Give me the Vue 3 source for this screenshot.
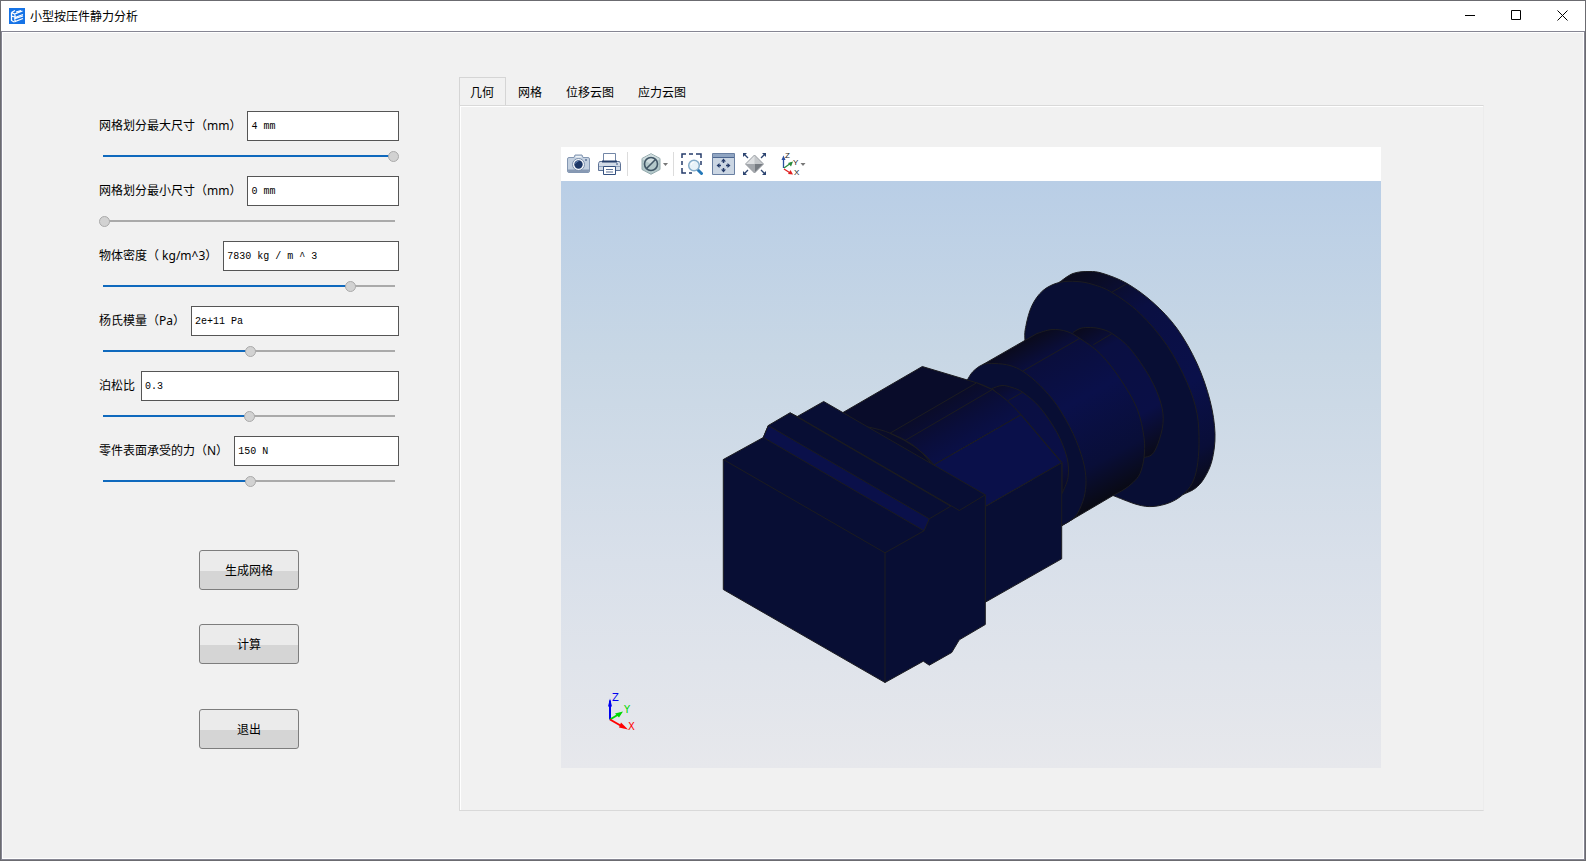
<template>
  <div class="window">
    <!-- 标题栏 -->
    <header class="title-bar">
      <svg class="app-logo" viewBox="0 0 16 16" aria-hidden="true">
        <rect width="16" height="16" fill="#1673e6" />
        <path d="M2.500 4.500 6 2.500M2.500 4.500v8L5 14M2.500 8l3 1M2.500 4.500 5.500 6l8-3M6 6v7.500l8-3M6 9.500l8-3M7 4l5-1.500M5 11 14 8" fill="none" stroke="#fff" stroke-width="1.300" />
      </svg>
      <h1>小型按压件静力分析</h1>
      <div class="window-actions">
        <button type="button" aria-label="最小化">
          <svg viewBox="0 0 11 11"><path d="M0 5.500h10" /></svg>
        </button>
        <button type="button" aria-label="最大化">
          <svg viewBox="0 0 11 11"><path d="M.5.500h9v9h-9z" /></svg>
        </button>
        <button type="button" aria-label="关闭">
          <svg viewBox="0 0 11 11"><path d="M.5.500l10 10M10.500.500l-10 10" /></svg>
        </button>
      </div>
    </header>

    <main class="content">
      <!-- 左侧参数 -->
      <form class="params" @submit.prevent>
        <div class="param" v-for="item in params" :key="item.id">
          <div class="param-row">
            <label :for="item.id">{{ item.label }}</label>
            <input class="param-input" :id="item.id" type="text" v-model="item.text" />
          </div>
          <input
            class="slider"
            type="range"
            min="0"
            max="100"
            step="0.5"
            v-model="item.value"
            :aria-label="item.label"
            :style="{ '--fill': item.value + '%' }"
          />
        </div>

        <div class="actions">
          <button type="button" class="action-btn">生成网格</button>
          <button type="button" class="action-btn">计算</button>
          <button type="button" class="action-btn exit-btn">退出</button>
        </div>
      </form>

      <!-- 右侧视图 -->
      <section class="viewer">
        <div class="tabs" role="tablist">
          <button
            v-for="tab in tabs"
            :key="tab"
            type="button"
            role="tab"
            class="tab"
            :class="{ active: tab === activeTab }"
            :aria-selected="tab === activeTab"
            @click="activeTab = tab"
          >{{ tab }}</button>
        </div>

        <div class="pane">
          <div class="toolbar">
            <button type="button" class="tool" aria-label="截图">
              <svg width="23" height="20" viewBox="0 0 23 20">
                <path d="M7 3.500 8 1h7l1 2.500h5q1.500 0 1.500 1.500v12q0 1.500-1.500 1.500H2Q.5 18.500.5 17V5q0-1.500 1.500-1.500z" fill="#c3d0e0" stroke="#8497b2" />
                <path d="M8 3.500 9 2h5l1 1.500z" fill="#eef3f8" />
                <path d="M1 15.500h21V17q0 1-1 1H2q-1 0-1-1z" fill="#8799b3" />
                <circle cx="11.500" cy="10.500" r="6" fill="#f4f7fa" stroke="#7b8fac" />
                <circle cx="11.500" cy="10.500" r="4.200" fill="#1d3766" />
                <path d="M8.500 9.500a3.300 3.300 0 0 1 3-2.500" fill="none" stroke="#6d8bbd" />
                <path d="M18 6h2" stroke="#2c4470" />
              </svg>
            </button>
            <button type="button" class="tool" aria-label="打印">
              <svg width="23" height="22" viewBox="0 0 23 22">
                <path d="M5.500 8V.500h12V8" fill="#fff" stroke="#7286a6" />
                <path d="M1.500 8.500h20l1 2v7h-22v-7z" fill="#d2dbe7" stroke="#5e7397" />
                <path d="M1 13.500h21" stroke="#8fa1bb" />
                <path d="M18 11h2" stroke="#34507f" />
                <path d="M4 8.500h15" stroke="#263f6b" stroke-width="2" />
                <path d="M5.500 13.500h12v8h-12z" fill="#fff" stroke="#34507f" />
                <path d="M8 16.500h7M8 19h7" stroke="#5e7397" />
              </svg>
            </button>
            <span class="divider"></span>
            <button type="button" class="tool" aria-label="剖切">
              <svg width="29" height="22" viewBox="0 0 29 22">
                <path d="M10 .7 19 5.500v11L10 21.300 1 16.500v-11z" fill="#b3c8ca" stroke="#93a9ac" />
                <path d="m10 1 9 5-9 5-9-5z" fill="#d0dddf" />
                <circle cx="10" cy="11" r="6.500" fill="none" stroke="#405666" stroke-width="1.600" />
                <path d="m5.500 15.500 9-9" stroke="#405666" stroke-width="1.600" />
                <path d="M22 10h5l-2.500 3z" fill="#777" />
              </svg>
            </button>
            <span class="divider"></span>
            <button type="button" class="tool" aria-label="框选缩放">
              <svg width="23" height="22" viewBox="0 0 23 22">
                <path d="M1 5V1h4M8 1h4M15 1h5v4M20 8v4M1 8v4M1 15v5h4M8 20h3" fill="none" stroke="#263c6b" stroke-width="1.500" />
                <path d="m16.500 16.500 4 4" stroke="#2478b8" stroke-width="3" stroke-linecap="round" />
                <circle cx="13" cy="12.500" r="5.300" fill="#e8f3f9" stroke="#86adca" stroke-width="1.500" />
                <path d="M10 12a3.500 3.500 0 0 1 3-3" fill="none" stroke="#fff" />
              </svg>
            </button>
            <button type="button" class="tool" aria-label="适合窗口">
              <svg width="23" height="22" viewBox="0 0 23 22">
                <path d="M.5.500h22v21H.5z" fill="#cbd6e3" stroke="#6a80a2" />
                <path d="M1 1h21v3H1z" fill="#90a5c2" />
                <path d="M1 4.500h21" stroke="#4c6690" />
                <path d="M11.500 7v3M11.500 15v3M6 12.500h3M14 12.500h3" stroke="#263c6b" stroke-width="1.500" />
                <path d="m11.500 5.500 2.500 3H9zM11.500 19.500 9 16.500h5zM4.500 12.500 7.500 10v5zM18.500 12.500 15.500 15v-5z" fill="#263c6b" />
              </svg>
            </button>
            <button type="button" class="tool" aria-label="全部显示">
              <svg width="23" height="22" viewBox="0 0 23 22">
                <path d="m11.500 2 9 9H2.500z" fill="#dfe1e3" />
                <path d="M11.500 2v9h9z" fill="#c6c9cc" />
                <path d="M2.500 11h9v9z" fill="#a3a7ac" />
                <path d="M11.500 11h9l-9 9z" fill="#777c82" />
                <path d="m11.500 2 9 9-9 9-9-9z" fill="none" stroke="#9a9ea3" />
                <path d="m1 1 4 4M22 1l-4 4M1 21l4-4M22 21l-4-4" stroke="#2c4470" stroke-width="1.300" />
                <path d="M0 0h4L0 4zM23 0h-4l4 4zM0 22v-4l4 4zM23 22v-4l-4 4z" fill="#2c4470" />
              </svg>
            </button>
            <button type="button" class="tool tool-axes" aria-label="视角">
              <svg width="26" height="24" viewBox="0 0 26 24">
                <g fill="none" stroke-width="1.300">
                  <path d="M2.500 16V6" stroke="#2b4fa0" />
                  <path d="m3 16 7-5" stroke="#2a8a3c" />
                  <path d="m3 17 7 4.500" stroke="#e02020" />
                </g>
                <path d="M2.500 3.500 4.500 8h-4z" fill="#2b4fa0" />
                <path d="m12 9.500-2 5-3-3.500z" fill="#2a8a3c" />
                <path d="m12 22.500-5-.500 2.500-4z" fill="#e02020" />
                <text x="4" y="6">Z</text>
                <text x="12" y="13">Y</text>
                <text x="13" y="23">X</text>
                <path d="M19.500 11h5L22 14z" fill="#777" />
              </svg>
            </button>
          </div>

          <div class="canvas">
            <svg class="scene" viewBox="561 181 820 586" role="img" aria-label="几何模型">
              <defs>
                <linearGradient id="flangeRim" gradientUnits="userSpaceOnUse" x1="1070" y1="275" x2="1195" y2="495">
                  <stop offset="0" stop-color="#0a0b1c" />
                  <stop offset="0.25" stop-color="#0a0f42" />
                  <stop offset="0.6" stop-color="#0a104a" />
                  <stop offset="0.85" stop-color="#090e38" />
                  <stop offset="1" stop-color="#0a0a14" />
                </linearGradient>
                <linearGradient id="cylinder" gradientUnits="userSpaceOnUse" x1="1005" y1="345" x2="1092" y2="507">
                  <stop offset="0" stop-color="#0a0a16" />
                  <stop offset="0.16" stop-color="#0a0e3c" />
                  <stop offset="0.45" stop-color="#0a104a" />
                  <stop offset="0.8" stop-color="#090e38" />
                  <stop offset="1" stop-color="#090a14" />
                </linearGradient>
                <linearGradient id="neck" gradientUnits="userSpaceOnUse" x1="1080" y1="327" x2="1154" y2="458">
                  <stop offset="0" stop-color="#0a0a1c" />
                  <stop offset="0.2" stop-color="#0a0f42" />
                  <stop offset="0.7" stop-color="#0a0f46" />
                  <stop offset="1" stop-color="#0a0a14" />
                </linearGradient>
                <linearGradient id="fillet" gradientUnits="userSpaceOnUse" x1="940" y1="405" x2="968" y2="453">
                  <stop offset="0" stop-color="#0a0c2a" />
                  <stop offset="0.5" stop-color="#0a0e3c" />
                  <stop offset="1" stop-color="#0a104a" />
                </linearGradient>
              </defs>

              <g class="solid">
                <!-- 圆盘 -->
                <path :d="flangeOuter" fill="url(#flangeRim)" />
                <path :d="flangeFace" fill="#080e34" />
                <path d="M1111.700 291.700 1126.700 283.300" />
                <!-- 细颈 -->
                <path :d="neckShape" fill="url(#neck)" />
                <path d="M1111.700 333.300 1093.300 344.300" />
                <!-- 圆柱 -->
                <path :d="cylinderShape" fill="url(#cylinder)" />
                <path :d="cylinderFace" fill="#080e34" />
                <path d="M1022.700 370.700 1080 337.700" />
                <path :d="innerShaft" fill="url(#neck)" />
                <path d="M1022.700 391.700 1008.300 400" />
                <!-- 中段 -->
                <path d="M843 412 922.300 366 976.700 382.300Q985 385 992.300 389L940 472 905 452z" fill="#090c2a" />
                <path d="M890 432.700 976.700 382.300 992.300 389Q1008 399 1021 414.300L934 464.300Q920 446 890 432.700z" fill="url(#fillet)" />
                <path d="M905 440 992.300 389" />
                <path d="M934 464.300 1021 414.300 1061.700 462.300 985.300 506z" fill="#0a104a" />
                <path d="M985.300 506 1061.700 462.300V558.300L985.300 601.700z" fill="#080e34" />
                <path d="M865 426Q882 429 890 432.700 916 442 930.700 462.300" />
                <!-- 头部 -->
                <path d="M723.300 459 763.300 437 768.300 425 790 412.300 797.300 416 823.700 401 985.300 494.300V624L959.300 639.300 951.700 652 929.300 664.700 923.300 660.700 885 682 723.300 589z" fill="#080e34" />
                <path d="M763.300 437 768.300 425 929.300 518.300 924 530.300z" fill="#0a104a" />
                <path d="M723.300 459 885 552.300V682M885 552.300 924 530.300M929.300 518.300 950.700 505.700M959.300 510 985.300 494.300M790 412.300 950.700 505.700M797.300 416 959.300 510" />
              </g>

              <!-- 坐标轴 -->
              <g class="triad">
                <path d="M610 719V700" stroke="#0000f0" stroke-width="2" />
                <path d="M610 698 612 706H608z" fill="#0000f0" />
                <path d="M610 719 620 713" stroke="#00d800" stroke-width="2" />
                <path d="M623 711 619 717 615 713z" fill="#00d800" />
                <path d="M610 719 624 727" stroke="#f00" stroke-width="2" />
                <path d="M628 729 619 727 621 722z" fill="#f00" />
                <text x="612" y="700" fill="#0000f0">Z</text>
                <text x="624" y="712" fill="#00d800">Y</text>
                <text x="628" y="729" fill="#f00">X</text>
              </g>
            </svg>
          </div>
        </div>
      </section>
    </main>
  </div>
</template>

<script setup>
import { ref, reactive } from 'vue'

const tabs = ['几何', '网格', '位移云图', '应力云图']
const activeTab = ref('几何')

const params = reactive([
  { id: 'mesh-max', label: '网格划分最大尺寸（mm）', text: '4 mm', value: 100 },
  { id: 'mesh-min', label: '网格划分最小尺寸（mm）', text: '0 mm', value: 0 },
  { id: 'density', label: '物体密度（ kg/m^3）', text: '7830 kg / m ^ 3', value: 85 },
  { id: 'young', label: '杨氏模量（Pa）', text: '2e+11 Pa', value: 50.5 },
  { id: 'poisson', label: '泊松比', text: '0.3', value: 50 },
  { id: 'force', label: '零件表面承受的力（N）', text: '150 N', value: 50.5 }
])

// 过所有点的平滑曲线
const smooth = (pts) => {
  let d = `M${pts[0][0]} ${pts[0][1]}`
  for (let i = 0; i < pts.length - 1; i++) {
    const a = pts[i - 1] || pts[i]
    const b = pts[i]
    const c = pts[i + 1]
    const e = pts[i + 2] || c
    d += `C${b[0] + (c[0] - a[0]) / 6} ${b[1] + (c[1] - a[1]) / 6} ${c[0] - (e[0] - b[0]) / 6} ${c[1] - (e[1] - b[1]) / 6} ${c[0]} ${c[1]}`
  }
  return d
}

const flangeLeft = [[1113, 495], [1080, 475], [1045, 420], [1029, 370], [1025, 340], [1026, 325], [1032, 305], [1043, 290], [1059, 282]]
const flangeEdge = [[1059, 282], [1077, 281], [1093, 284], [1112, 292], [1140, 313], [1167, 345], [1187, 382], [1197, 413], [1199, 443], [1197, 467], [1192, 483], [1183, 494]]
const flangeBottom = [[1183, 494], [1170, 502], [1153, 506], [1137, 504], [1113, 495]]

const flangeOuter = smooth([
  [1059, 282], [1073, 273], [1089, 271], [1103, 273], [1127, 283], [1153, 302], [1177, 328], [1197, 363],
  [1210, 400], [1215, 433], [1212, 460], [1204, 478], [1195, 488], [1183, 494]
])
const flangeFace = smooth([...flangeLeft, ...flangeEdge.slice(1), ...flangeBottom.slice(1)]) + 'z'

const neckShape = smooth([
  [1073, 332], [1080, 328], [1088, 327], [1099, 328], [1112, 333], [1130, 348], [1150, 377], [1161, 403],
  [1163, 423], [1158, 443], [1152, 454], [1144, 457]
])

const cylinderShape = smooth([
  [1037, 333], [1052, 329], [1067, 331], [1080, 338], [1100, 353], [1120, 378], [1137, 408], [1144, 437],
  [1144, 457], [1140, 473], [1133, 482], [1124, 489], [1113, 495]
]) + 'L1062 525 983 364z'

const cylinderFace = smooth([
  [967, 380], [973, 371], [983, 364], [995, 363], [1010, 365], [1023, 371], [1040, 385], [1057, 405],
  [1073, 433], [1083, 460], [1086, 480], [1084, 497], [1078, 512], [1072, 519], [1062, 525]
]) + 'z'

const innerShaft = smooth([
  [992, 388], [1002, 385], [1012, 387], [1023, 392], [1040, 407], [1057, 432], [1067, 457], [1068, 477], [1062, 493]
]) + 'V462L1021 414z'
</script>

<style>
html,
body {
  margin: 0;
  background: #f0f0f0;
}
</style>

<style scoped>
.window {
  min-height: 100vh;
  box-sizing: border-box;
  display: flex;
  flex-direction: column;
  border: 1px solid #6b6b70;
  font-family: "Noto Sans CJK SC", sans-serif;
  font-size: 12px;
  color: #000;
}

button {
  font-family: inherit;
  font-size: inherit;
  color: inherit;
}

/* 标题栏 */
.title-bar {
  height: 30px;
  display: flex;
  align-items: center;
  gap: 5px;
  padding-left: 8px;
  background: #fff;
}

.app-logo {
  width: 16px;
  height: 16px;
}

h1 {
  flex: 1;
  margin: 0;
  padding-bottom: 2px;
  font-size: 12px;
  font-weight: 400;
}

.window-actions {
  display: flex;
}

.window-actions button {
  width: 46px;
  height: 30px;
  display: grid;
  place-items: center;
  padding: 0 0 2px;
  border: 0;
  background: none;
}

.window-actions svg {
  width: 11px;
  height: 11px;
  fill: none;
  stroke: #000;
}

/* 主体 */
.content {
  flex: 1;
  display: grid;
  grid-template-columns: 300px minmax(0, 1fr);
  gap: 60px;
  padding: 45px 100px 48px 97px;
  border: 1px solid #868693;
  box-shadow: inset 0 0 0 1px #fff;
  background: #f1f1f1;
}

/* 参数表单 */
.params {
  padding-top: 34px;
}

.param {
  margin-bottom: 14px;
}

.param-row {
  display: flex;
  align-items: center;
  gap: 6px;
  margin-bottom: 10px;
}

.param-row label {
  padding-bottom: 2px;
  font-family: "Noto Sans", "Noto Sans CJK SC", sans-serif;
  white-space: pre;
}

.param-input {
  flex: 1;
  min-width: 0;
  height: 30px;
  box-sizing: border-box;
  padding: 0 3px;
  border: 1px solid #555;
  background: #fff;
  font-family: "Liberation Mono", monospace;
  font-size: 10px;
  color: #000;
}

.slider {
  appearance: none;
  display: block;
  width: 100%;
  height: 11px;
  margin: 0;
  background: linear-gradient(to right, #0f69bd var(--fill), #aaa var(--fill)) no-repeat 4px 4px / calc(100% - 8px) 2px;
}

.slider::-webkit-slider-thumb {
  appearance: none;
  width: 11px;
  height: 11px;
  box-sizing: border-box;
  border: 1px solid #aaa;
  border-radius: 50%;
  background: #d2d2d2;
}

.actions {
  display: flex;
  flex-direction: column;
  align-items: center;
  gap: 34px;
  padding-top: 49px;
}

.action-btn {
  width: 100px;
  height: 40px;
  padding: 0 0 2px;
  border: 1px solid #7d7d7d;
  border-radius: 3px;
  background: linear-gradient(#ebebeb 53%, #d5d5d5 53%);
}

.exit-btn {
  margin-top: 11px;
}

/* 选项卡 */
.viewer {
  display: flex;
  flex-direction: column;
}

.tabs {
  display: flex;
}

.tab {
  height: 28px;
  padding: 0 12px;
  border: 0;
  background: none;
}

.tab.active {
  padding: 0 11px 0 10px;
  border: 1px solid #d5d5d5;
  border-bottom: 0;
}

.pane {
  flex: 1;
  display: flex;
  flex-direction: column;
  padding: 41px 102px 42px 101px;
  border: 1px solid #d9d9d9;
  border-right-color: #ececec;
  box-shadow: inset 1px 1px 0 #fff;
}

/* 工具栏 */
.toolbar {
  height: 34px;
  display: flex;
  align-items: center;
  gap: 8px;
  padding-left: 6px;
  background: #fff;
}

.tool {
  display: flex;
  padding: 0;
  border: 0;
  background: none;
}

.divider {
  width: 1px;
  height: 24px;
  margin: 0 5px 0 -2px;
  background: #dcdcdc;
}

.divider + .tool + .divider {
  margin: 0 -1px 0 -5px;
}

.tool-axes {
  margin-left: 7px;
}

.tool-axes text {
  font-family: "Liberation Sans", sans-serif;
  font-size: 8px;
  fill: #222;
}

/* 三维视图 */
.canvas {
  flex: 1;
  display: flex;
  background: linear-gradient(#b9cee6, #c8d7e5 30%, #d9e0ea 65%, #e7e8ec);
}

.scene {
  flex: 1;
  min-width: 0;
}

.solid {
  fill: none;
  stroke: #1c1c20;
  stroke-width: 1;
  stroke-linejoin: round;
}

.triad text {
  font-family: "DejaVu Sans", sans-serif;
  font-size: 10px;
}
</style>
